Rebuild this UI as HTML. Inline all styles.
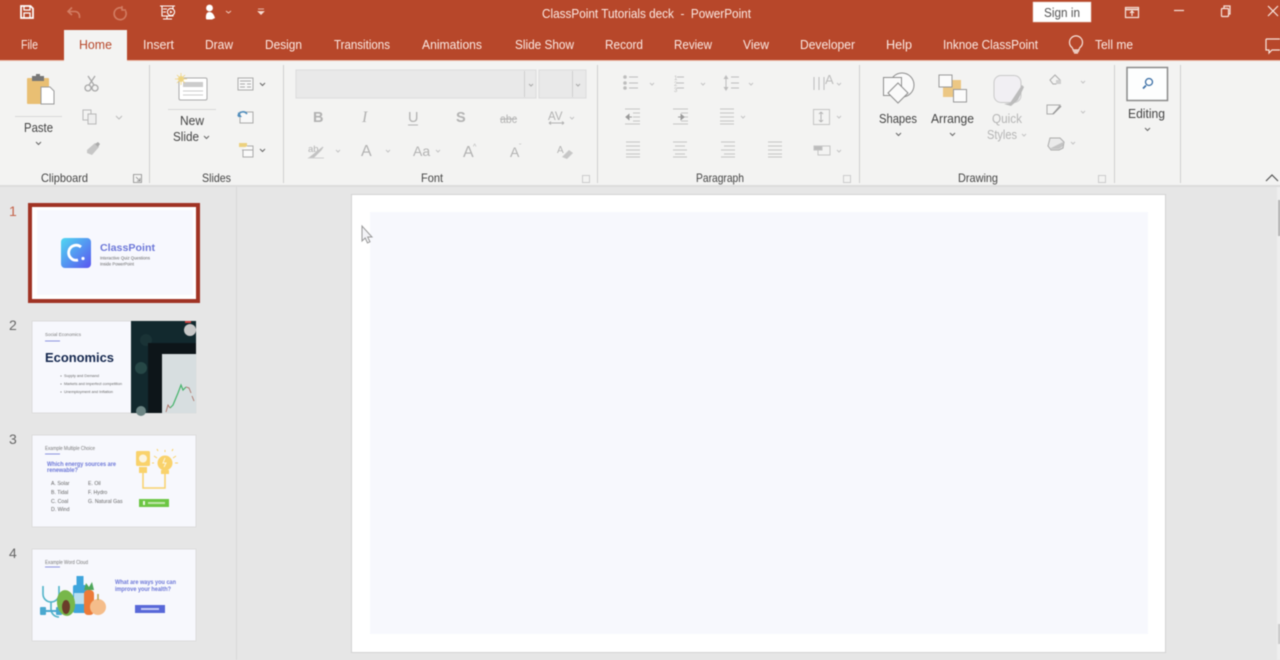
<!DOCTYPE html>
<html><head><meta charset="utf-8"><title>ClassPoint Tutorials deck - PowerPoint</title>
<style>
html,body{margin:0;padding:0;width:1280px;height:656px;overflow:hidden;background:#e6e6e6}
svg{display:block;position:absolute;left:-4px;top:-4px;font-family:"Liberation Sans",sans-serif;filter:blur(.45px)}
.t{font-size:13px;fill:#fbe9e3}
.r{font-size:13px;fill:#444}
.l{stroke:#b8b8b8;stroke-width:1;fill:none}
.w{fill:none;stroke:#fff;stroke-width:1.5}
</style></head><body>
<svg width="1288" height="664" viewBox="-4 -4 1288 664" xmlns="http://www.w3.org/2000/svg">
<defs>
<linearGradient id="cp" x1="0" y1="0" x2="1" y2="1"><stop offset="0" stop-color="#4fd8f2"/><stop offset="1" stop-color="#5a55f0"/></linearGradient>
</defs>
<!-- backgrounds -->
<rect x="-4" y="-4" width="1288" height="664" fill="#e6e6e6"/>
<rect x="-4" y="-4" width="1288" height="64" fill="#b7472a"/>
<rect x="-4" y="60" width="1288" height="126" fill="#f3f3f2"/>
<rect x="-4" y="60" width="1288" height="1" fill="#eab9a8"/>
<rect x="-4" y="185" width="1288" height="2" fill="#dcdcdc"/>
<rect x="64" y="30" width="63" height="31" fill="#f3f3f2"/>
<!-- title bar icons -->
<g class="w">
<path d="M21 6h9.500l2.500 2.500V18H21z" stroke-width="1.700"/><path d="M24 6v4h6V6M24 18v-5h6v5" stroke-width="1.300"/>
</g>
<path d="M72 7.500l-4 4 4 3.500M68 11.500h7a4.500 4.500 0 0 1 4.500 4.500v2" fill="none" stroke="#d27d63" stroke-width="1.600"/>
<path d="M122 8A6 6 0 1 0 125.500 11M122 6v4h4" fill="none" stroke="#d27d63" stroke-width="1.600"/>
<g fill="none" stroke="#fff" stroke-width="1.100"><path d="M160 6h15M162 6v10h11V6M167 16v3M163 19h9"/><circle cx="171" cy="12" r="3.600" fill="#b7472a"/><path d="M163 9h4M163 12h3"/></g>
<path d="M170 10.500l2.600 1.500-2.600 1.500z" fill="#fff"/>
<circle cx="209.500" cy="8" r="3.400" fill="#fff"/><path d="M206 19c-.5-4 .5-7 3.500-7s4.500 3 5.500 6l-3 1.500h-5z" fill="#fff"/>
<path d="M226 11l2.500 2 2.500-2" fill="none" stroke="#f0cabc"/>
<path d="M258 9h6M258 11.500h6l-3 3z" fill="#f6dbd1" stroke="#f6dbd1" stroke-width=".7"/>
<!-- title -->
<text x="542" y="18" textLength="209" lengthAdjust="spacingAndGlyphs" style="white-space:pre" font-size="12.500" fill="#fbe9e3">ClassPoint Tutorials deck  -  PowerPoint</text>
<rect x="1033" y="2" width="58" height="20" fill="#fff" stroke="#e8c8bb" stroke-width=".5"/>
<text x="1044" y="17" textLength="36" lengthAdjust="spacingAndGlyphs" font-size="13" fill="#555">Sign in</text>
<g fill="none" stroke="#f6e4dd" stroke-width="1.200">
<rect x="1125.500" y="7.500" width="13" height="10"/><path d="M1126 9.500h12" stroke-width="1.600"/><path d="M1132 16v-5M1130 13l2-2 2 2"/>
<path d="M1174 10.500h10"/>
<rect x="1221.500" y="8.500" width="7" height="8" rx="1"/><path d="M1224 8v-2h6v8h-1.500"/>
<path d="M1268 6l10 10M1278 6l-10 10"/>
<path d="M1266 39h14M1266 39v11h3v3l3-3h8"/>
<path d="M1072 47.500a6.500 6.500 0 1 1 8 0c-.7.800-1 1.500-1 2.500h-6c0-1-.3-1.700-1-2.500zM1073 51.500h6M1074 53h4"/>
</g>
<!-- tabs -->
<g class="t">
<text x="21" y="49" textLength="17" lengthAdjust="spacingAndGlyphs">File</text>
<text x="143" y="49" textLength="31" lengthAdjust="spacingAndGlyphs">Insert</text>
<text x="205" y="49" textLength="28" lengthAdjust="spacingAndGlyphs">Draw</text>
<text x="265" y="49" textLength="37" lengthAdjust="spacingAndGlyphs">Design</text>
<text x="334" y="49" textLength="56" lengthAdjust="spacingAndGlyphs">Transitions</text>
<text x="422" y="49" textLength="60" lengthAdjust="spacingAndGlyphs">Animations</text>
<text x="515" y="49" textLength="59" lengthAdjust="spacingAndGlyphs">Slide Show</text>
<text x="605" y="49" textLength="38" lengthAdjust="spacingAndGlyphs">Record</text>
<text x="674" y="49" textLength="38" lengthAdjust="spacingAndGlyphs">Review</text>
<text x="743" y="49" textLength="26" lengthAdjust="spacingAndGlyphs">View</text>
<text x="800" y="49" textLength="55" lengthAdjust="spacingAndGlyphs">Developer</text>
<text x="886" y="49" textLength="26" lengthAdjust="spacingAndGlyphs">Help</text>
<text x="943" y="49" textLength="95" lengthAdjust="spacingAndGlyphs">Inknoe ClassPoint</text>
<text x="1095" y="49" textLength="38" lengthAdjust="spacingAndGlyphs">Tell me</text>
</g>
<text x="79" y="49" textLength="33" lengthAdjust="spacingAndGlyphs" font-size="13" fill="#b7472a">Home</text>
<!-- ribbon separators -->
<g stroke="#cfcfcf" stroke-width="1">
<path d="M149.500 65v118M283.500 65v118M597.500 65v118M859.500 65v118M1114.500 65v118M1180.500 65v118"/>
</g>
<!-- Clipboard -->
<rect x="27" y="78" width="22" height="26" rx="1" fill="#e9bf73"/>
<rect x="32" y="76" width="12" height="5" fill="#777"/><rect x="36" y="74" width="4" height="3" fill="#777"/>
<path d="M41 87h9l4 4v13H41z" fill="#fff" stroke="#9a9a9a"/>
<path d="M15 116.500h47" stroke="#d8d8d8"/>
<text x="24" y="132" textLength="29" lengthAdjust="spacingAndGlyphs" class="r">Paste</text>
<path d="M36 142l2.500 2.500 2.500-2.500" fill="none" stroke="#666"/>
<g fill="none" stroke="#a8a8a8" stroke-width="1.300"><circle cx="88" cy="88" r="3"/><circle cx="95" cy="88" r="3"/><path d="M89 85l6-9M94 85l-6-9"/></g>
<g class="l"><rect x="83" y="110" width="8" height="10"/><rect x="88" y="114" width="8" height="10" fill="#eee"/></g>
<path d="M116 116l3 3 3-3" fill="none" stroke="#bbb"/>
<path d="M87 150l8-7 4 4-7 8-5-2z" fill="#c6c6c6"/>
<path d="M95 144l3-2 2 2-2 3z" fill="#aaa"/>
<text x="41" y="182" textLength="47" lengthAdjust="spacingAndGlyphs" class="r" style="font-size:12px">Clipboard</text>
<path d="M133.500 174.500h8v8h-8zM136 177l4 4M140 178v3h-3" fill="none" stroke="#888" stroke-width=".8"/>
<!-- Slides -->
<rect x="179" y="78" width="28" height="22" rx="1.500" fill="#fff" stroke="#aaa"/>
<rect x="183" y="82" width="20" height="5" fill="#ccc"/><path d="M183 91h20M183 95h20" stroke="#ccc"/>
<circle cx="181" cy="79" r="3" fill="#f0d98c"/>
<path d="M181 73v12M175 79h12M177 75l8 8M185 75l-8 8" stroke="#eed27e" stroke-width=".8"/>
<path d="M168 109.500h48" stroke="#d8d8d8"/>
<text x="180" y="125" textLength="24" lengthAdjust="spacingAndGlyphs" class="r">New</text>
<text x="173" y="141" textLength="26" lengthAdjust="spacingAndGlyphs" class="r">Slide</text>
<path d="M204 136l2.500 2.500 2.500-2.500" fill="none" stroke="#666"/>
<g fill="none" stroke="#aaa"><rect x="238" y="78" width="15" height="12" fill="#f8f8f8"/><path d="M240 81h11M240 84h5M247 84h4M240 87h5M247 87h4"/></g>
<path d="M260 83l2.500 2.500 2.500-2.500" fill="none" stroke="#666"/>
<rect x="240" y="112" width="13" height="11" fill="#f8f8f8" stroke="#aaa"/>
<path d="M238 116a5 5 0 0 1 9-2" fill="none" stroke="#4f8dbd" stroke-width="1.600"/><path d="M238 112v5h4z" fill="#4f8dbd"/>
<rect x="239" y="143" width="8" height="4" fill="#ecd17f"/><path d="M242 150h11v-4h-6M243 150v7h10v-7" fill="#fafafa" stroke="#aaa"/>
<path d="M260 149l2.500 2.500 2.500-2.500" fill="none" stroke="#666"/>
<text x="202" y="182" textLength="29" lengthAdjust="spacingAndGlyphs" class="r" style="font-size:12px">Slides</text>
<!-- Font -->
<rect x="296" y="70" width="240" height="28" fill="#e9e9e9" stroke="#dcdcdc"/>
<rect x="539" y="70" width="47" height="28" fill="#e9e9e9" stroke="#dcdcdc"/>
<path d="M524.500 71v26M572.500 71v26" stroke="#d0d0d0"/>
<path d="M529 84l2 2 2-2M576 84l2 2 2-2" fill="none" stroke="#aaa"/>
<g fill="#b2b2b2" font-size="14.500">
<text x="313" y="122" font-weight="bold">B</text>
<text x="362" y="122" font-style="italic" font-family="Liberation Serif,serif" font-size="16">I</text>
<text x="408" y="122">U</text><path d="M408 125h10" stroke="#b2b2b2"/>
<text x="456" y="122" font-weight="bold">S</text>
<text x="500" y="123" font-size="12" textLength="17" lengthAdjust="spacingAndGlyphs">abc</text><path d="M500 119h17" stroke="#b2b2b2"/>
<text x="548" y="120" font-size="11.500">AV</text><path d="M549 123h15M549 123l2-1.500M549 123l2 1.500M564 123l-2-1.500M564 123l-2 1.500" stroke="#b2b2b2" fill="none"/>
<text x="361" y="156" font-size="16">A</text>
<text x="413" y="156" font-size="14">Aa</text>
<text x="463" y="157" font-size="16">A</text><text x="473" y="149" font-size="7">^</text>
<text x="510" y="157" font-size="14">A</text><text x="519" y="149" font-size="7">ˇ</text>
<text x="557" y="153" font-size="10">A</text>
<text x="308" y="152" font-size="9.500">ab</text>
</g>
<path d="M309 158l14-11-2 3-8 8z" fill="#c2c2c2" stroke="#c2c2c2"/><path d="M308 158h16" stroke="#cfcfcf"/>
<path d="M562 157l7-7 4 3-6 6z" fill="#c7c7c7"/>
<path d="M570 117l2 2 2-2M336 150l2 2 2-2M386 150l2 2 2-2M436 150l2 2 2-2" fill="none" stroke="#c4c4c4"/>
<text x="421" y="182" textLength="22" lengthAdjust="spacingAndGlyphs" class="r" style="font-size:12px">Font</text>
<path d="M582.500 175.500h7v7h-7z" fill="none" stroke="#ccc"/>
<!-- Paragraph -->
<g stroke="#bdbdbd" fill="none">
<path d="M629 77h9M629 83h9M629 88h9M677 77h7M677 83h7M677 88h7"/>
<path d="M731 77h8M731 83h8M731 88h8M726 78v10"/>
<path d="M814 90V77M819 90V77M824 90V77"/>
</g>
<g fill="#bdbdbd"><circle cx="625" cy="77" r="1.800"/><circle cx="625" cy="83" r="1.800"/><circle cx="625" cy="88" r="1.800"/>
<text x="674" y="80" font-size="6">1</text><text x="674" y="86" font-size="6">2</text><text x="674" y="92" font-size="6">3</text>
<text x="825" y="84" font-size="13">A</text>
<path d="M723.500 79l2.500-4 2.500 4zM723.500 87l2.500 4 2.500-4z"/></g>
<g stroke="#c4c4c4" fill="none">
<path d="M625 109h15M633 113h7M633 117h7M633 121h7M625 124h15"/>
<path d="M673 109h15M681 113h7M681 117h7M681 121h7M673 124h15"/>
<path d="M720 109h14M720 113h14M720 117h14M720 121h14M720 124h14"/>
<path d="M626 142h14M626 146h14M626 150h14M626 154h14M626 157h14"/>
<path d="M673 142h14M675 146h10M673 150h14M675 154h10M673 157h14"/>
<path d="M721 142h14M724 146h11M721 150h14M724 154h11M721 157h14"/>
<path d="M768 142h14M768 146h14M768 150h14M768 154h14M768 157h14"/>
<rect x="813.500" y="109.500" width="16" height="15"/>
<rect x="818" y="146" width="12" height="9"/><path d="M814 146h8v4h-8z" fill="#bbb"/>
<path d="M650 83l2 2 2-2M701 83l2 2 2-2M749 83l2 2 2-2M837 83l2 2 2-2M741 116l2 2 2-2M837 116l2 2 2-2M837 150l2 2 2-2"/>
</g>
<path d="M626 117h6M626 117l3-2.500v5zM684 117h-6M684 117l-3-2.500v5z" fill="#9a9a9a" stroke="#9a9a9a"/>
<path d="M821 112v10M821 112l-2 2M821 112l2 2M821 122l-2-2M821 122l2-2" stroke="#b5b5b5" fill="none"/>
<text x="696" y="182" textLength="48" lengthAdjust="spacingAndGlyphs" class="r" style="font-size:12px">Paragraph</text>
<path d="M843.500 175.500h7v7h-7z" fill="none" stroke="#ccc"/>
<!-- Drawing -->
<circle cx="902" cy="85" r="12" fill="#fafafa" stroke="#8e8e8e"/>
<rect x="883.500" y="77.500" width="18" height="18" fill="#fafafa" stroke="#8e8e8e"/>
<path d="M898 83l10 10-10 10-10-10z" fill="#fafafa" stroke="#8e8e8e"/>
<rect x="943" y="80" width="18" height="17" fill="#ecc784"/>
<rect x="939" y="75" width="13" height="12" fill="#fbfbfb" stroke="#999"/>
<rect x="953.500" y="89.500" width="13" height="12.500" fill="#fbfbfb" stroke="#999"/>
<text x="879" y="123" textLength="38" lengthAdjust="spacingAndGlyphs" class="r">Shapes</text>
<path d="M896 133l2.500 2.500 2.500-2.500" fill="none" stroke="#666"/>
<text x="931" y="123" textLength="43" lengthAdjust="spacingAndGlyphs" class="r">Arrange</text>
<path d="M950 133l2.500 2.500 2.500-2.500" fill="none" stroke="#666"/>
<rect x="994" y="75.500" width="27" height="27" rx="7" fill="#f1eff3" stroke="#c9c9c9"/>
<path d="M1004 104l6-1 12-18 2 2-6 13-7 6z" fill="#bcbcbc"/>
<text x="992" y="123" textLength="30" lengthAdjust="spacingAndGlyphs" class="r" style="fill:#b5b5b5">Quick</text>
<text x="987" y="139" textLength="30" lengthAdjust="spacingAndGlyphs" class="r" style="fill:#b5b5b5">Styles</text>
<path d="M1022 134l2 2 2-2M1081 81l2 2 2-2M1081 111l2 2 2-2M1071 142l2 2 2-2" fill="none" stroke="#c4c4c4"/>
<path d="M1050 80l5-5 5 5-4 4h-3z" fill="none" stroke="#aaa"/><rect x="1056" y="80" width="5" height="4" fill="#cfcfcf"/>
<path d="M1047 105h13l-2 3-5 6h-6z" fill="none" stroke="#aaa"/><path d="M1053 114l8-8" stroke="#999" stroke-width="1.500"/>
<path d="M1050 138h10l4 4-1 6-4 2h-8l-3-4z" fill="#eaeaea" stroke="#aaa"/><path d="M1049 149h10l4-3 0-4z" fill="#c4c4c4"/>
<text x="958" y="182" textLength="40" lengthAdjust="spacingAndGlyphs" class="r" style="font-size:12px">Drawing</text>
<path d="M1098.500 175.500h7v7h-7z" fill="none" stroke="#ccc"/>
<!-- Editing -->
<rect x="1127" y="67.500" width="40.500" height="33" fill="#fdfefe" stroke="#8a8a8a" stroke-width="1.500"/>
<circle cx="1149" cy="82" r="3.500" fill="none" stroke="#3a6ea5" stroke-width="1.300"/>
<path d="M1146 85.500l-3 3" stroke="#3a6ea5" stroke-width="1.700"/>
<text x="1128" y="118" textLength="37" lengthAdjust="spacingAndGlyphs" class="r">Editing</text>
<path d="M1145 128l2.500 2.500 2.500-2.500" fill="none" stroke="#666"/>
<path d="M1266 181l6-6 6 6" fill="none" stroke="#555" stroke-width="1.200"/>
<!-- work areas -->
<rect x="236" y="187" width="1" height="473" fill="#d8d8d8"/>
<rect x="351.500" y="194.500" width="814" height="458" fill="#fff" stroke="#d2d2d2"/>
<rect x="370" y="212" width="778" height="422" fill="#f7f8fd"/>
<rect x="1277" y="187" width="7" height="473" fill="#eeeeee"/>
<rect x="1278" y="200" width="6" height="36" fill="#b9b9b9"/>
<rect x="1278" y="624" width="6" height="20" fill="#cccccc"/>
<path d="M362 226v15l3.200-3 2.300 5 2.500-1.200-2.300-4.800h4.300z" fill="#f3f3f6" stroke="#999"/>
<!-- thumbnails -->
<text x="9" y="216" font-size="14" fill="#c4634a">1</text>
<text x="9" y="330" font-size="14" fill="#666">2</text>
<text x="9" y="444" font-size="14" fill="#666">3</text>
<text x="9" y="558" font-size="14" fill="#666">4</text>
<!-- slide 1 -->
<rect x="30" y="205" width="168" height="96" fill="#fff" stroke="#a03324" stroke-width="4"/>
<rect x="37" y="210" width="156" height="85" fill="#f7f8fe"/>
<rect x="61" y="238" width="30" height="30" rx="4" fill="url(#cp)"/>
<path d="M81 247A7.500 7.500 0 1 0 78 260" fill="none" stroke="#fff" stroke-width="2.800"/><circle cx="83" cy="258.500" r="1.600" fill="#fff"/>
<text x="100" y="251" textLength="55" lengthAdjust="spacingAndGlyphs" font-size="10.500" font-weight="bold" fill="#6d78d8">ClassPoint</text>
<text x="100" y="259.500" textLength="50" lengthAdjust="spacingAndGlyphs" font-size="4.200" fill="#666">Interactive Quiz Questions</text>
<text x="100" y="265.500" textLength="34" lengthAdjust="spacingAndGlyphs" font-size="4.200" fill="#666">Inside PowerPoint</text>
<!-- slide 2 -->
<rect x="32" y="321" width="164" height="92" fill="#f7f8fd" stroke="#dcdcdc"/>
<rect x="131" y="321" width="65" height="92" fill="#12292e"/>
<circle cx="146" cy="340" r="6" fill="#1a3336"/><circle cx="141" cy="368" r="6" fill="#264746"/><circle cx="141" cy="411" r="5" fill="#6c8584"/>
<rect x="185" y="321" width="6" height="2" fill="#c9413f"/><circle cx="190" cy="330" r="6" fill="#c9c9c9"/>
<rect x="148" y="343" width="48" height="11" fill="#0d1519"/><rect x="148" y="343" width="14" height="70" fill="#0d1519"/>
<rect x="162" y="354" width="34" height="59" fill="#d7dee0"/>
<path d="M170 408l3-3 5-12 3-8 2 5 3-3" fill="none" stroke="#45b36b" stroke-width="1.200"/>
<path d="M166 412l2-7 2 3M186 387l3 1 2 5M192 396l2 5" stroke="#a8685c" stroke-width=".8" fill="none"/>
<text x="45" y="336" textLength="36" lengthAdjust="spacingAndGlyphs" font-size="4.500" fill="#777">Social Economics</text>
<path d="M45 341h15" stroke="#5e6ad2" stroke-width=".7"/>
<text x="45" y="362" textLength="69" lengthAdjust="spacingAndGlyphs" font-size="13" font-weight="bold" fill="#14274e">Economics</text>
<g font-size="4" fill="#666">
<text x="64" y="377" textLength="35" lengthAdjust="spacingAndGlyphs">Supply and Demand</text>
<text x="64" y="385" textLength="58" lengthAdjust="spacingAndGlyphs">Markets and imperfect competition</text>
<text x="64" y="393" textLength="49" lengthAdjust="spacingAndGlyphs">Unemployment and Inflation</text>
</g>
<g fill="#888"><circle cx="61" cy="376" r=".6"/><circle cx="61" cy="384" r=".6"/><circle cx="61" cy="392" r=".6"/></g>
<!-- slide 3 -->
<rect x="32" y="435" width="164" height="92" fill="#f7f8fd" stroke="#dcdcdc"/>
<text x="45" y="450" textLength="50" lengthAdjust="spacingAndGlyphs" font-size="5" fill="#777">Example Multiple Choice</text>
<path d="M45 454h15" stroke="#5e6ad2" stroke-width=".7"/>
<text x="47" y="466" textLength="69" lengthAdjust="spacingAndGlyphs" font-size="6.200" font-weight="bold" fill="#6d78d8">Which energy sources are</text>
<text x="47" y="472" textLength="31" lengthAdjust="spacingAndGlyphs" font-size="6.200" font-weight="bold" fill="#6d78d8">renewable?</text>
<g font-size="5.200" fill="#666">
<text x="51" y="485">A.  Solar</text><text x="51" y="494">B.  Tidal</text><text x="51" y="503">C.  Coal</text><text x="51" y="511">D.  Wind</text>
<text x="88" y="485">E.  Oil</text><text x="88" y="494">F.  Hydro</text><text x="88" y="503">G.  Natural Gas</text>
</g>
<rect x="136" y="451" width="14" height="15" rx="1.500" fill="#f9d26b"/><circle cx="143" cy="458.500" r="4" fill="#fbf4df"/>
<rect x="139" y="467" width="8" height="6" fill="#f9d26b"/>
<path d="M143 473v15h22v-16" fill="none" stroke="#f9d26b" stroke-width="1.500"/>
<circle cx="165" cy="463" r="7.500" fill="#f9d26b"/><rect x="161" y="470" width="8" height="4" fill="#f9d26b"/>
<path d="M165 458l-2 5h3l-2 4" fill="none" stroke="#fdf6e0"/>
<path d="M154 456l3 2M176 456l-3 2M178 463h-3M154 463h-2M165 452v-2M157 449l1 2M173 449l-1 2" stroke="#f9d26b"/>
<rect x="139" y="499" width="30" height="8" fill="#6cc644"/>
<rect x="143" y="501" width="2" height="4" fill="#eaf8e0"/><rect x="148" y="502" width="17" height="2" fill="#bfe6aa"/>
<!-- slide 4 -->
<rect x="32" y="549" width="164" height="92" fill="#f7f8fd" stroke="#dcdcdc"/>
<text x="45" y="564" textLength="43" lengthAdjust="spacingAndGlyphs" font-size="5" fill="#777">Example Word Cloud</text>
<path d="M45 567h15" stroke="#5e6ad2" stroke-width=".7"/>
<text x="115" y="584" textLength="61" lengthAdjust="spacingAndGlyphs" font-size="6.200" font-weight="bold" fill="#6d78d8">What are ways you can</text>
<text x="115" y="591" textLength="56" lengthAdjust="spacingAndGlyphs" font-size="6.200" font-weight="bold" fill="#6d78d8">improve your health?</text>
<rect x="135" y="605" width="30" height="8" fill="#5868d8"/><rect x="141" y="608" width="18" height="2" fill="#c5cbf5"/>
<path d="M43 586v8a8 8 0 0 0 16 0v-8M51 602v7a8 8 0 0 0 8 8" fill="none" stroke="#4fb3c8" stroke-width="1.600"/>
<rect x="40" y="607" width="6" height="8" rx="1" fill="#4aa8cf"/><rect x="46" y="610" width="12" height="2" fill="#4aa8cf"/><rect x="56" y="607" width="6" height="8" rx="1" fill="#4aa8cf"/>
<rect x="73" y="585" width="14" height="28" rx="2" fill="#3fa5dc"/><rect x="76.500" y="576" width="7" height="10" fill="#3fa5dc"/><rect x="74" y="593" width="12" height="11" fill="#b8def0"/>
<ellipse cx="66" cy="603" rx="9" ry="13" fill="#77b74a" transform="rotate(-8 66 603)"/><ellipse cx="66" cy="607" rx="4" ry="7" fill="#6a3d2a"/>
<rect x="84" y="590" width="10" height="25" rx="4" fill="#ec7b39"/>
<path d="M84 590l2-7 3 4 3-5 2 8z" fill="#4ea75a"/>
<circle cx="98" cy="607" r="8" fill="#f5bd8a"/><path d="M98 594v6" stroke="#b7a24f" stroke-width="1.500"/>
</svg>
</body></html>
